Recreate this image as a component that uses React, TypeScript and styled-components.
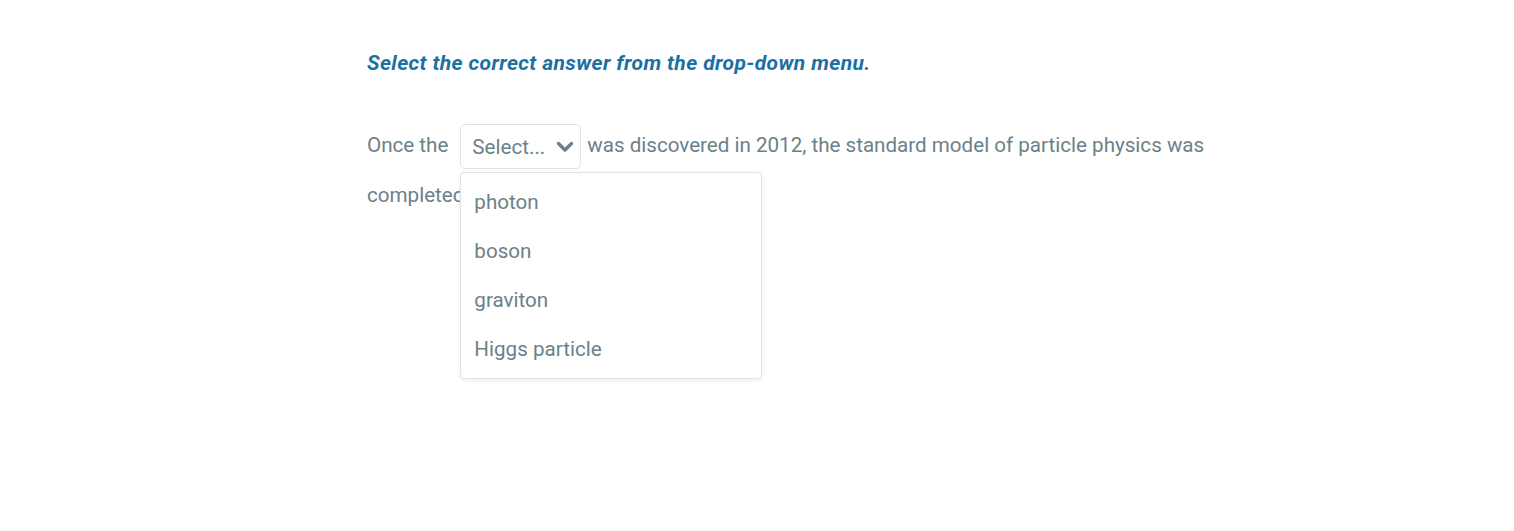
import React, { useState } from "react";
import styled, { createGlobalStyle } from "styled-components";

const GlobalStyle = createGlobalStyle`
  html, body {
    margin: 0;
    padding: 0;
    background: #ffffff;
  }
  body {
    font-family: Roboto, "Noto Sans", sans-serif;
  }
`;

const Page = styled.div`
  padding: 50px 0 0 367px;
  min-height: 531px;
  box-sizing: border-box;
`;

const Instruction = styled.h2`
  margin: 0;
  font-size: 21px;
  line-height: 26px;
  font-weight: 700;
  font-style: italic;
  color: #1a6fa3;
  letter-spacing: 0.4px;
`;

const Question = styled.p`
  margin: 44px 0 0;
  width: 860px;
  font-size: 20.6px;
  line-height: 50px;
  color: #6b8189;
`;

const SelectWrap = styled.span`
  position: relative;
  display: inline-block;
  vertical-align: middle;
  margin: -3px 6px -3px 12px;
`;

const SelectButton = styled.button`
  display: inline-flex;
  align-items: center;
  gap: 11px;
  height: 45px;
  padding: 0 6px 0 11px;
  border: 1px solid #dfe3e5;
  border-radius: 5px;
  background: #ffffff;
  font-family: inherit;
  font-size: 20.6px;
  color: #6b8189;
  cursor: pointer;
`;

const Menu = styled.ul`
  position: absolute;
  top: 50px;
  left: 0;
  width: 302px;
  margin: 0;
  padding: 5px 0 4px;
  list-style: none;
  background: #ffffff;
  border: 1px solid #dfe3e5;
  border-radius: 4px;
  box-shadow: 0 1px 4px rgba(0, 0, 0, 0.08);
  box-sizing: border-box;
  z-index: 2;
`;

const Option = styled.li`
  padding: 0 13px;
  font-size: 20.6px;
  line-height: 49px;
  color: #6b8189;
  cursor: pointer;
`;

const Chevron = () => (
  <svg width="18" height="12" viewBox="0 0 18 12" aria-hidden="true">
    <polyline
      points="2.5,2.5 9,9 15.5,2.5"
      fill="none"
      stroke="#6b8189"
      strokeWidth="3.4"
      strokeLinecap="round"
      strokeLinejoin="round"
    />
  </svg>
);

const options = ["photon", "boson", "graviton", "Higgs particle"];

const App = () => {
  const [open, setOpen] = useState<boolean>(true);

  return (
    <Page>
      <GlobalStyle />
      <Instruction>Select the correct answer from the drop-down menu.</Instruction>
      <Question>
        Once the
        <SelectWrap>
          <SelectButton onClick={() => setOpen(!open)}>
            Select...
            <Chevron />
          </SelectButton>
          {open && (
            <Menu>
              {options.map((o) => (
                <Option key={o} onClick={() => setOpen(false)}>
                  {o}
                </Option>
              ))}
            </Menu>
          )}
        </SelectWrap>
        was discovered in 2012, the standard model of particle physics was
        completed.
      </Question>
    </Page>
  );
};

export default App;
